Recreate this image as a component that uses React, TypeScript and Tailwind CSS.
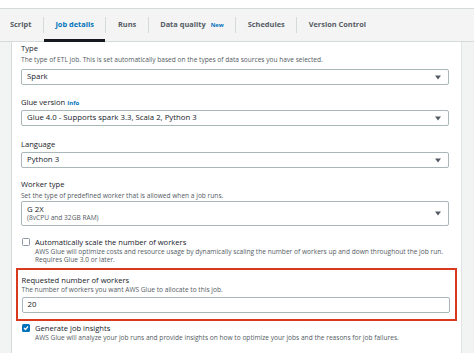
import React from "react";

const font = { fontFamily: '"Open Sans", "Noto Sans", Arial, sans-serif' };

function Caret() {
  return (
    <svg width="6" height="5" viewBox="0 0 6 5" className="shrink-0">
      <path d="M0 0.5 H6 L3 4.5 Z" fill="#545b64" />
    </svg>
  );
}

function Select({ children, tall }: { children: React.ReactNode; tall?: boolean }) {
  return (
    <div
      className={`flex items-center justify-between border border-[#aab7b8] rounded-[2px] bg-white pl-[5px] pr-[7px] ${
        tall ? "h-[25px]" : "h-[16px]"
      }`}
    >
      <div className="flex flex-col">{children}</div>
      <Caret />
    </div>
  );
}

function Label({ children }: { children: React.ReactNode }) {
  return <div className="text-[7.6px] leading-[10px] text-[#16191f]">{children}</div>;
}

function Desc({ children }: { children: React.ReactNode }) {
  return <div className="text-[6.6px] leading-[8px] text-[#545b64]">{children}</div>;
}

function Checkbox({ checked }: { checked?: boolean }) {
  return checked ? (
    <div className="w-[8px] h-[8px] rounded-[1.5px] bg-[#0073bb] flex items-center justify-center shrink-0">
      <svg width="6" height="6" viewBox="0 0 6 6">
        <path d="M1 3 L2.5 4.5 L5 1.5" stroke="white" strokeWidth="1.2" fill="none" />
      </svg>
    </div>
  ) : (
    <div className="w-[8px] h-[8px] rounded-[1.5px] border border-[#8d99a8] bg-white shrink-0" />
  );
}

const tabs = ["Script", "Job details", "Runs", "Data quality", "Schedules", "Version Control"];

export default function App() {
  return (
    <div className="w-[474px] h-[353px] overflow-hidden bg-white flex flex-col" style={font}>
      <div className="h-[8px] bg-white" />
      <div className="h-[34px] bg-[#f4f4f4] border-t border-b border-[#d5dbdb] flex items-stretch pl-[10px]">
        {tabs.map((t, i) => (
          <div key={t} className="flex items-center">
            {i > 0 && <div className="w-px h-[16px] bg-[#d5dbdb]" />}
            <div
              className={`h-full flex items-center text-[7.4px] font-bold relative ${
                i === 0 ? "pr-[11.5px]" : "px-[11.5px]"
              } ${t === "Job details" ? "text-[#0073bb]" : "text-[#545b64]"}`}
            >
              {t}
              {t === "Data quality" && (
                <span className="ml-[5px] text-[5.8px] text-[#0073bb]">New</span>
              )}
              {t === "Job details" && (
                <div className="absolute left-0 right-0 bottom-[-1px] h-[3px] bg-[#16191f]" />
              )}
            </div>
          </div>
        ))}
      </div>
      <div className="flex flex-1">
        <div className="w-[12px] bg-[#f2f3f3] border-r border-[#d5dbdb]" />
        <div className="flex-1 pl-[9px] pr-[12px] pt-[1px]">
          <Label>Type</Label>
          <div className="mt-[3px]">
            <Desc>The type of ETL job. This is set automatically based on the types of data sources you have selected.</Desc>
          </div>
          <div className="mt-[5px]">
            <Select>
              <span className="text-[7.8px] text-[#16191f]">Spark</span>
            </Select>
          </div>

          <div className="mt-[12px]">
            <Label>
              Glue version <span className="text-[6px] font-bold text-[#0073bb]">Info</span>
            </Label>
          </div>
          <div className="mt-[2px]">
            <Select>
              <span className="text-[7.8px] text-[#16191f]">Glue 4.0 - Supports spark 3.3, Scala 2, Python 3</span>
            </Select>
          </div>

          <div className="mt-[13px]">
            <Label>Language</Label>
          </div>
          <div className="mt-[3px]">
            <Select>
              <span className="text-[7.8px] text-[#16191f]">Python 3</span>
            </Select>
          </div>

          <div className="mt-[11px]">
            <Label>Worker type</Label>
          </div>
          <div className="mt-[3px]">
            <Desc>Set the type of predefined worker that is allowed when a job runs.</Desc>
          </div>
          <div className="mt-[1px]">
            <Select tall>
              <span className="text-[7.8px] leading-[9px] text-[#16191f]">G 2X</span>
              <span className="text-[6.6px] leading-[8px] text-[#545b64]">(8vCPU and 32GB RAM)</span>
            </Select>
          </div>

          <div className="mt-[11px] flex items-center gap-[5px] pl-[1px]">
            <Checkbox />
            <Label>Automatically scale the number of workers</Label>
          </div>
          <div className="pl-[14px] mt-[1px]">
            <Desc>
              AWS Glue will optimize costs and resource usage by dynamically scaling the number of workers up and down throughout the job run.
            </Desc>
            <Desc>Requires Glue 3.0 or later.</Desc>
          </div>

          <div className="mt-[4px] -ml-[5px] -mr-[8px] border-[2.5px] border-[#d9391d] pl-[3.5px] pr-[5px] pt-[5px] pb-[6px]">
            <Label>Requested number of workers</Label>
            <div className="mt-[1px]">
              <Desc>The number of workers you want AWS Glue to allocate to this job.</Desc>
            </div>
            <div className="mt-[3px] h-[16px] border border-[#aab7b8] rounded-[2px] flex items-center pl-[5px] text-[7.8px] text-[#16191f]">
              20
            </div>
          </div>

          <div className="mt-[2px] flex items-center gap-[5px] pl-[1px]">
            <Checkbox checked />
            <Label>Generate job insights</Label>
          </div>
          <div className="pl-[14px] mt-[1px]">
            <Desc>AWS Glue will analyze your job runs and provide insights on how to optimize your jobs and the reasons for job failures.</Desc>
          </div>
        </div>
        <div className="w-[13px] bg-[#f2f3f3] border-l border-[#e1e4e4]" />
      </div>
    </div>
  );
}
